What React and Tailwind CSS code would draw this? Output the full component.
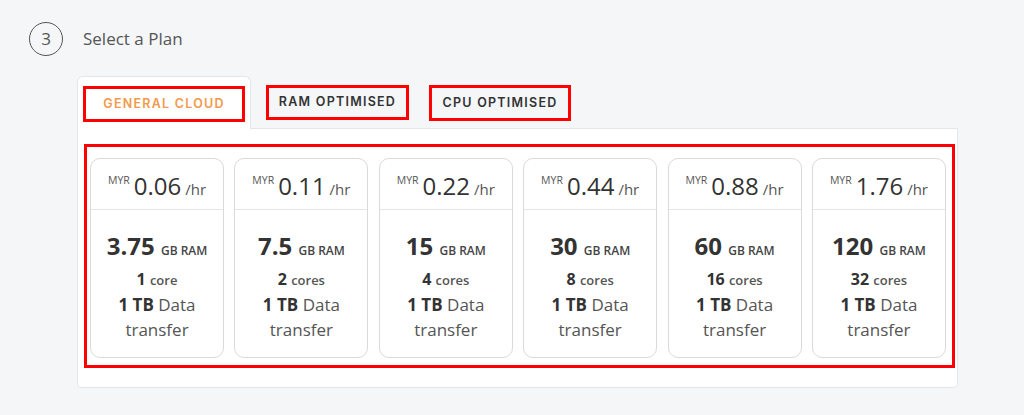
import React from 'react';

const plans = [
  { price: '0.06', ram: '3.75', cores: '1', coreLabel: 'core' },
  { price: '0.11', ram: '7.5', cores: '2', coreLabel: 'cores' },
  { price: '0.22', ram: '15', cores: '4', coreLabel: 'cores' },
  { price: '0.44', ram: '30', cores: '8', coreLabel: 'cores' },
  { price: '0.88', ram: '60', cores: '16', coreLabel: 'cores' },
  { price: '1.76', ram: '120', cores: '32', coreLabel: 'cores' },
];

const PlanCard = ({ plan }) => (
  <div className="w-[134px] h-[200px] rounded-[10px] border border-[#dadada] bg-white flex flex-col">
    <div className="h-[51px] border-b border-[#e6e6e6] flex items-center justify-center pt-[4px]">
      <div className="flex items-baseline">
        <span className="text-[10.5px] text-[#555] leading-none relative -top-[11px] mr-[4px]">MYR</span>
        <span className="text-[24px] text-[#333] leading-none">{plan.price}</span>
        <span className="text-[15px] text-[#555] leading-none ml-[4px]">/hr</span>
      </div>
    </div>
    <div className="flex flex-col items-center text-center pt-[20px]">
      <div className="leading-[32px] text-[#333]">
        <span className="text-[24px] font-bold">{plan.ram} </span>
        <span className="text-[12px] font-semibold text-[#444]">GB RAM</span>
      </div>
      <div className="leading-[24px] text-[#333]">
        <span className="text-[16px] font-bold">{plan.cores} </span>
        <span className="text-[13px] font-semibold text-[#555]">{plan.coreLabel}</span>
      </div>
      <div className="leading-[25px] text-[17px] text-[#555]">
        <span className="font-bold text-[#333]">1 TB</span> Data
        <br />
        transfer
      </div>
    </div>
  </div>
);

const tabText = "flex items-center justify-center text-[12.5px] font-semibold tracking-[0.1em] font-['Inter',sans-serif]";

export default function App() {
  return (
    <div className="w-[1024px] h-[415px] bg-[#f4f6f8] font-['Open_Sans',sans-serif] overflow-hidden">
      <div className="flex items-center pt-[22px] pl-[29px]">
        <div className="w-[34px] h-[34px] rounded-full border-[1.5px] border-[#555] flex items-center justify-center text-[17px] text-[#555]">
          3
        </div>
        <span className="ml-[20px] text-[17px] text-[#555]">Select a Plan</span>
      </div>

      <div className="ml-[77px] mt-[20px] w-[881px]">
        <div className="flex items-start h-[52px]">
          <div className="w-[174px] h-[53px] bg-white rounded-t-[6px] border border-b-0 border-[#e3e7ea] pt-[9px] px-[5px] relative z-10">
            <div className={`h-[36px] border-[3px] border-[#f00] text-[#f29a4a] ${tabText}`}>
              GENERAL CLOUD
            </div>
          </div>
          <div className={`ml-[15px] mt-[9px] w-[143px] h-[35px] border-[3px] border-[#f00] text-[#333] ${tabText}`}>
            RAM OPTIMISED
          </div>
          <div className={`ml-[20px] mt-[9px] w-[142px] h-[36px] border-[3px] border-[#f00] text-[#333] ${tabText}`}>
            CPU OPTIMISED
          </div>
        </div>

        <div className="h-[260px] bg-white border border-[#e3e7ea] rounded-b-[4px] pt-[15px] pl-[6px] pr-[2px]">
          <div className="h-[224px] border-[3px] border-[#f00] pt-[11px] pl-[3px] pr-[6px] flex justify-between">
            {plans.map((plan) => (
              <PlanCard key={plan.price} plan={plan} />
            ))}
          </div>
        </div>
      </div>
    </div>
  );
}
